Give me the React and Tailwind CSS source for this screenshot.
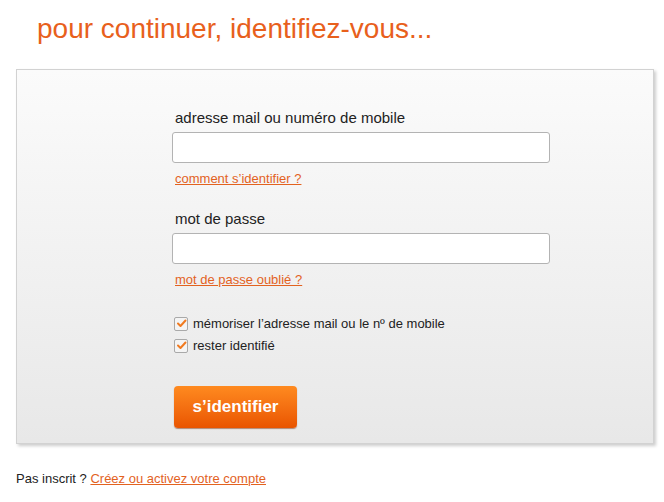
import React from 'react';

const Check = () => (
  <span className="inline-flex h-[14px] w-[14px] shrink-0 items-center justify-center rounded-[2px] border border-[#a9a9a9] bg-[#f4f4f4]">
    <svg width="11" height="11" viewBox="0 0 11 11">
      <path d="M2 5.5 L4.5 8 L9.5 2.5" fill="none" stroke="#f07a20" strokeWidth="2" strokeLinecap="round" strokeLinejoin="round" />
    </svg>
  </span>
);

const Field = ({ label, link, id }) => (
  <div>
    <label htmlFor={id} className="ml-[3px] block text-[15px] leading-[18px] text-[#222]">{label}</label>
    <input
      id={id}
      className="mt-[5px] block h-[31px] w-[378px] rounded-[3px] border border-[#b3b3b3] bg-white outline-none"
    />
    <a href="#" className="ml-[3px] mt-[8px] block w-fit text-[13px] leading-[15px] text-[#e3621f] underline">{link}</a>
  </div>
);

export default function App() {
  return (
    <div className="min-h-screen bg-white pb-4" style={{ fontFamily: '"Liberation Sans", Arial, sans-serif' }}>
      <h1 className="pl-[37px] pt-[13px] text-[28px] leading-[32px] text-[#e8601c]">
        pour continuer, identifiez-vous...
      </h1>

      <div className="ml-[16px] mt-[24px] w-[638px] border border-[#d2d2d2] bg-gradient-to-b from-[#fbfbfb] to-[#e8e8e8] pb-[15px] pl-[155px] pt-[39px] shadow-[2px_2px_3px_rgba(0,0,0,0.2)]">
        <Field id="login" label="adresse mail ou numéro de mobile" link="comment s’identifier ?" />
        <div className="mt-[24px]">
          <Field id="pwd" label="mot de passe" link="mot de passe oublié ?" />
        </div>

        <div className="ml-[2px] mt-[29px] flex flex-col gap-[7px] text-[13px] leading-[15px] text-[#222]">
          <label className="flex items-center gap-[5px]"><Check />mémoriser l’adresse mail ou le nº de mobile</label>
          <label className="flex items-center gap-[5px]"><Check />rester identifié</label>
        </div>

        <button className="ml-[2px] mt-[33px] h-[42px] w-[123px] rounded-[4px] bg-gradient-to-b from-[#ff8a1f] to-[#e95400] text-[17px] font-bold text-white shadow-[0_1px_1px_rgba(120,40,0,0.5)]">
          s’identifier
        </button>
      </div>

      <p className="mt-[27px] pl-[16px] text-[13px] leading-[15px] text-[#222]">
        Pas inscrit ? <a href="#" className="text-[#e3621f] underline">Créez ou activez votre compte</a>
      </p>
    </div>
  );
}
